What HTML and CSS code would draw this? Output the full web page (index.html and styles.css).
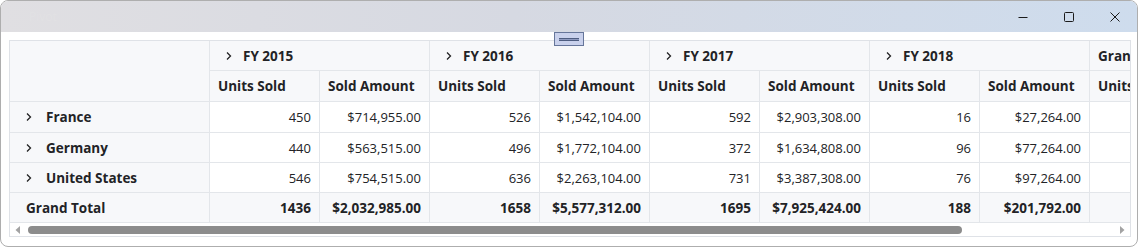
FILE: index.html
```html
<!DOCTYPE html>
<html>
<head>
<meta charset="utf-8">
<link rel="stylesheet" href="styles.css">
</head>
<body>
<div class="window">
  <div class="titlebar">
    <div class="title">Pivot</div>
    <div class="controls">
      <span class="ctl"><svg width="12" height="12" viewBox="0 0 12 12"><path d="M1.5 6.5 H10.5" stroke="#1b1b1b" stroke-width="1"/></svg></span>
      <span class="ctl"><svg width="12" height="12" viewBox="0 0 12 12"><rect x="1.5" y="1.5" width="9" height="9" rx="1" fill="none" stroke="#1b1b1b" stroke-width="1"/></svg></span>
      <span class="ctl"><svg width="12" height="12" viewBox="0 0 12 12"><path d="M1.5 1.5 L10.5 10.5 M10.5 1.5 L1.5 10.5" stroke="#1b1b1b" stroke-width="1"/></svg></span>
    </div>
  </div>
  <div class="content">
    <div class="grip"><span></span></div>
    <div class="pivot">
      <div class="grid">
        <div class="c corner"></div>
        <div class="c hd fy"><svg class="chev" width="8" height="10" viewBox="0 0 8 10"><path d="M2 1.5 L5.5 5 L2 8.5" fill="none" stroke="#222" stroke-width="1.3"/></svg>FY 2015</div>
        <div class="c hd fy"><svg class="chev" width="8" height="10" viewBox="0 0 8 10"><path d="M2 1.5 L5.5 5 L2 8.5" fill="none" stroke="#222" stroke-width="1.3"/></svg>FY 2016</div>
        <div class="c hd fy"><svg class="chev" width="8" height="10" viewBox="0 0 8 10"><path d="M2 1.5 L5.5 5 L2 8.5" fill="none" stroke="#222" stroke-width="1.3"/></svg>FY 2017</div>
        <div class="c hd fy"><svg class="chev" width="8" height="10" viewBox="0 0 8 10"><path d="M2 1.5 L5.5 5 L2 8.5" fill="none" stroke="#222" stroke-width="1.3"/></svg>FY 2018</div>
        <div class="c hd gt">Grand Total</div>

        <div class="c hd sub">Units Sold</div>
        <div class="c hd sub">Sold Amount</div>
        <div class="c hd sub">Units Sold</div>
        <div class="c hd sub">Sold Amount</div>
        <div class="c hd sub">Units Sold</div>
        <div class="c hd sub">Sold Amount</div>
        <div class="c hd sub">Units Sold</div>
        <div class="c hd sub">Sold Amount</div>
        <div class="c hd sub">Units Sold</div>

        <div class="c rh r1"><svg class="chev" width="8" height="10" viewBox="0 0 8 10"><path d="M2 1.5 L5.5 5 L2 8.5" fill="none" stroke="#222" stroke-width="1.3"/></svg>France</div>
        <div class="c num r1">450</div><div class="c num r1">$714,955.00</div>
        <div class="c num r1">526</div><div class="c num r1">$1,542,104.00</div>
        <div class="c num r1">592</div><div class="c num r1">$2,903,308.00</div>
        <div class="c num r1">16</div><div class="c num r1">$27,264.00</div>
        <div class="c num r1"></div>

        <div class="c rh"><svg class="chev" width="8" height="10" viewBox="0 0 8 10"><path d="M2 1.5 L5.5 5 L2 8.5" fill="none" stroke="#222" stroke-width="1.3"/></svg>Germany</div>
        <div class="c num">440</div><div class="c num">$563,515.00</div>
        <div class="c num">496</div><div class="c num">$1,772,104.00</div>
        <div class="c num">372</div><div class="c num">$1,634,808.00</div>
        <div class="c num">96</div><div class="c num">$77,264.00</div>
        <div class="c num"></div>

        <div class="c rh"><svg class="chev" width="8" height="10" viewBox="0 0 8 10"><path d="M2 1.5 L5.5 5 L2 8.5" fill="none" stroke="#222" stroke-width="1.3"/></svg>United States</div>
        <div class="c num">546</div><div class="c num">$754,515.00</div>
        <div class="c num">636</div><div class="c num">$2,263,104.00</div>
        <div class="c num">731</div><div class="c num">$3,387,308.00</div>
        <div class="c num">76</div><div class="c num">$97,264.00</div>
        <div class="c num"></div>

        <div class="c tot tl">Grand Total</div>
        <div class="c tot num">1436</div><div class="c tot num">$2,032,985.00</div>
        <div class="c tot num">1658</div><div class="c tot num">$5,577,312.00</div>
        <div class="c tot num">1695</div><div class="c tot num">$7,925,424.00</div>
        <div class="c tot num">188</div><div class="c tot num">$201,792.00</div>
        <div class="c tot num"></div>
      </div>
      <div class="hscroll">
        <svg class="arrow" width="8" height="10" viewBox="0 0 8 10"><path d="M6 1 L1.5 5 L6 9 Z" fill="#a3a3a3"/></svg>
        <div class="track"><div class="thumb"></div></div>
        <svg class="arrow" width="8" height="10" viewBox="0 0 8 10"><path d="M2 1 L6.5 5 L2 9 Z" fill="#a3a3a3"/></svg>
      </div>
    </div>
  </div>
</div>
</body>
</html>
```
FILE: styles.css
```css
* { box-sizing: border-box; }
html, body { margin: 0; padding: 0; background: #ffffff; }
body {
  font-family: "Open Sans", "Noto Sans", sans-serif;
  font-size: 13px;
  color: #222326;
}
.window {
  width: 1138px;
  height: 247px;
  border: 1px solid #aeaeae;
  border-radius: 8px;
  overflow: hidden;
  background: #ffffff;
  display: flex;
  flex-direction: column;
}
.titlebar {
  height: 31px;
  flex: none;
  background: linear-gradient(90deg, #e0dfe2 0%, #d6d9e2 45%, #cedced 100%);
  display: flex;
  align-items: center;
  justify-content: space-between;
}
.title {
  padding-left: 28px;
  color: rgba(255,255,255,0.08);
  font-size: 12px;
}
.controls {
  display: flex;
  gap: 34px;
  padding-right: 16px;
}
.ctl { display: flex; width: 12px; height: 12px; }
.content {
  position: relative;
  flex: 1;
  padding: 8px 0 0 8px;
}
.grip {
  position: absolute;
  left: 553px;
  top: 0;
  width: 30px;
  height: 14px;
  background: #c9d1ec;
  border: 1px solid #66769a;
  display: flex;
  align-items: center;
  justify-content: center;
  z-index: 2;
}
.grip span {
  display: block;
  width: 20px;
  height: 3px;
  border-top: 1px solid #4e5d80;
  border-bottom: 1px solid #4e5d80;
  background: #8e9ac0;
}
.pivot {
  width: 1122px;
  border: 1px solid #dfe2e7;
  overflow: hidden;
}
.grid {
  display: grid;
  grid-template-columns: 200px repeat(9, 110px);
  grid-template-rows: 30px 31px 31px 30px 30px 29px;
  width: 1190px;
}
.c {
  border-right: 1px solid #e3e6ea;
  border-bottom: 1px solid #e3e6ea;
  display: flex;
  align-items: center;
  white-space: nowrap;
  overflow: hidden;
  background: #ffffff;
}
.corner {
  grid-row: span 2;
  background: #f7f8fa;
}
.hd {
  background: #f7f8fa;
  font-weight: 700;
  font-size: 13.5px;
}
.fy {
  grid-column: span 2;
  padding-left: 15px;
}
.chev { flex: none; margin-right: 10px; }
.gt, .sub { padding-left: 8px; }
.rh {
  background: #f7f8fa;
  font-weight: 700;
  font-size: 13.5px;
  padding-left: 15px;
}
.rh .chev { margin-right: 13px; }
.num {
  justify-content: flex-end;
  padding-right: 8px;
}
.tot {
  background: #f7f8fa;
  font-weight: 700;
  font-size: 13.5px;
  border-bottom: none;
}
.tl { padding-left: 16px; }
.hscroll {
  height: 14px;
  display: flex;
  align-items: center;
  border-top: 1px solid #e3e6ea;
  padding: 0 4px 0 4px;
  gap: 6px;
}
.arrow { flex: none; }
.track {
  flex: 1;
  height: 8px;
}
.thumb {
  width: 934px;
  height: 8px;
  border-radius: 4px;
  background: #8c8c8c;
}
```
